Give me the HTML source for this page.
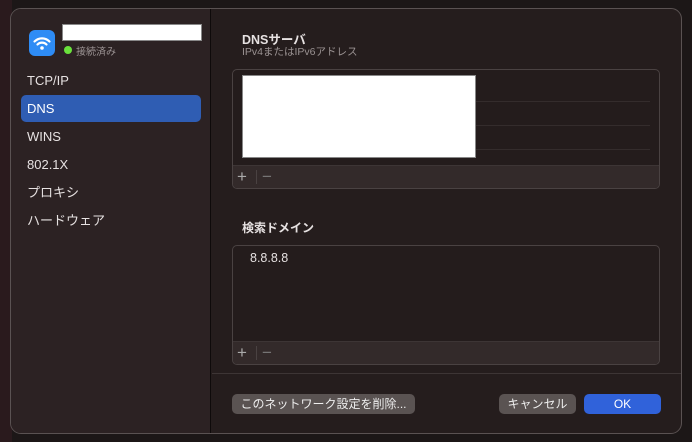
<!DOCTYPE html>
<html><head><meta charset="utf-8"><style>
*{margin:0;padding:0;box-sizing:border-box}
body{width:692px;height:442px;background:#1c1717;position:relative;overflow:hidden;font-family:"Liberation Sans","Noto Sans CJK JP",sans-serif;color:#e6e1e1}
.bgl{position:absolute;left:0;top:0;width:12px;height:442px;background:#2a1a1d}
.win{position:absolute;left:10px;top:8px;width:672px;height:426px;border-radius:11px;background:#251d1d;border:1px solid #5a5252;overflow:hidden}
.side{position:absolute;left:0;top:0;width:200px;height:100%;background:#2c2223;border-right:1px solid #0e0a0a}
.ab{position:absolute;font-size:13px}
.item{position:absolute;left:10px;width:180px;height:27px;line-height:27px;padding-left:6px;font-size:13px;border-radius:5px}
.sel{background:#2f5db3;color:#fff}
.box{position:absolute;left:221px;width:428px;border:1px solid #4a4242;border-radius:5px;background:#241c1c;overflow:hidden}
.ft{position:absolute;left:0;right:0;bottom:0;height:23px;background:#332a2a;border-top:1px solid #3d3535;font-size:17px;line-height:22px;color:#aaa}
.btn{position:absolute;top:385px;height:20px;border-radius:5px;background:#5a5352;color:#eee;font-size:12px;text-align:center;line-height:20px}
</style></head><body>
<div class="bgl"></div>
<div class="win">
<div class="side">
 <div style="position:absolute;left:18px;top:21px;width:26px;height:26px;border-radius:6px;background:#2e8cf5">
  <svg width="26" height="26" viewBox="0 0 26 26"><g fill="none" stroke="#fff" stroke-width="2.2" stroke-linecap="round"><path d="M5.5 11.5a10.5 10.5 0 0 1 15 0"/><path d="M8.5 14.5a6.3 6.3 0 0 1 9 0"/></g><circle cx="13" cy="18" r="1.8" fill="#fff"/></svg>
 </div>
 <div style="position:absolute;left:51px;top:15px;width:140px;height:17px;background:#fff;border:1px solid #888"></div>
 <div style="position:absolute;left:53px;top:37px;width:8px;height:8px;border-radius:50%;background:#6ae23c"></div>
 <div class="ab" style="left:65px;top:34px;font-size:10px;color:#9a9292">接続済み</div>
 <div class="item" style="top:58px">TCP/IP</div>
 <div class="item sel" style="top:86px">DNS</div>
 <div class="item" style="top:114px">WINS</div>
 <div class="item" style="top:142px">802.1X</div>
 <div class="item" style="top:170px">プロキシ</div>
 <div class="item" style="top:198px">ハードウェア</div>
</div>
<div class="ab" style="left:231px;top:20px;font-weight:bold;font-size:12.5px">DNSサーバ</div>
<div class="ab" style="left:231px;top:35px;font-size:10.5px;color:#9a9292">IPv4またはIPv6アドレス</div>
<div class="box" style="top:60px;height:120px">
 <div style="position:absolute;left:9px;top:5px;width:234px;height:83px;background:#fff;border:1px solid #888"></div>
 <div style="position:absolute;left:243px;right:9px;top:31px;border-top:1px solid #342c2c"></div>
 <div style="position:absolute;left:243px;right:9px;top:55px;border-top:1px solid #342c2c"></div>
 <div style="position:absolute;left:243px;right:9px;top:79px;border-top:1px solid #342c2c"></div>
 <div class="ft"><span style="position:absolute;left:4px;top:0">+</span><span style="position:absolute;left:23px;top:4px;height:14px;border-left:1px solid #4a4242"></span><span style="position:absolute;left:29px;top:0;color:#777">−</span></div>
</div>
<div class="ab" style="left:231px;top:210px;font-weight:bold;font-size:12px">検索ドメイン</div>
<div class="box" style="top:236px;height:120px">
 <div class="ab" style="left:17px;top:5px;font-size:12.5px">8.8.8.8</div>
 <div class="ft"><span style="position:absolute;left:4px;top:0">+</span><span style="position:absolute;left:23px;top:4px;height:14px;border-left:1px solid #4a4242"></span><span style="position:absolute;left:29px;top:0;color:#777">−</span></div>
</div>
<div style="position:absolute;left:201px;right:0;top:364px;border-top:1px solid #3d3535"></div>
<div class="btn" style="left:221px;width:183px">このネットワーク設定を削除...</div>
<div class="btn" style="left:488px;width:77px">キャンセル</div>
<div class="btn" style="left:573px;width:77px;background:#3062da;color:#fff">OK</div>
</div>
</body></html>
